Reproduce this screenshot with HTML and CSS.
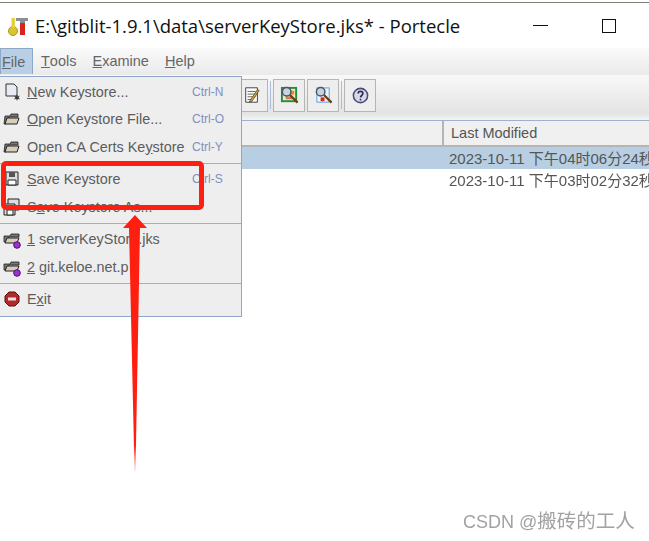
FILE: index.html
```html
<!DOCTYPE html>
<html lang="zh">
<head>
<meta charset="utf-8">
<title>Portecle</title>
<link rel="stylesheet" href="styles.css">
</head>
<body>
<div class="page">
  <header class="titlebar">
    <svg class="app-icon" width="22" height="22" viewBox="0 0 22 22">
      <circle cx="6" cy="16" r="4.500" fill="#d9c52e" stroke="#a89a20"/>
      <rect x="4.500" y="3" width="3.400" height="10" fill="#e3d03a"/>
      <rect x="13" y="7" width="5" height="13" fill="#d8241c"/>
      <path d="M9 3h12v3h-3v2h-5V6H9z" fill="#8a8f94"/>
    </svg>
    <span class="title-text">E:\gitblit-1.9.1\data\serverKeyStore.jks* - Portecle</span>
    <div class="win-controls">
      <span class="win-min"></span>
      <span class="win-max"></span>
    </div>
  </header>

  <div class="soft">
    <nav class="menubar">
      <span class="menu-title active"><u>F</u>ile</span>
      <span class="menu-title"><u>T</u>ools</span>
      <span class="menu-title"><u>E</u>xamine</span>
      <span class="menu-title"><u>H</u>elp</span>
    </nav>

    <div class="toolbar">
      <span class="tool">
        <svg width="18" height="18" viewBox="0 0 20 20"><path d="M3 2h13v16H3z" fill="#fff" stroke="#333"/><path d="M5 6h9M5 9h9M5 12h9M5 15h6" stroke="#555"/><path d="M8 16 16 4l2 1-8 12-3 1z" fill="#d9a21e" stroke="#333" stroke-width=".7"/></svg>
      </span>
      <span class="tool-sep"></span>
      <span class="tool">
        <svg width="19" height="19" viewBox="0 0 20 20"><rect x="2" y="2" width="15" height="14" fill="#f4e7c8" stroke="#1f8f3a" stroke-width="2"/><rect x="11" y="5" width="4" height="4" fill="#e98a2a"/><rect x="6" y="11" width="7" height="3" fill="#d87a5a"/><circle cx="7" cy="6" r="4.500" fill="#c7d3e0" stroke="#4a5560" stroke-width="1.500"/><path d="m10.500 9.500 8 8" stroke="#6b3f16" stroke-width="2.400"/></svg>
      </span>
      <span class="tool">
        <svg width="19" height="19" viewBox="0 0 20 20"><rect x="3" y="2" width="13" height="15" fill="#eef4fb" stroke="#5aa0e0"/><rect x="7" y="12" width="4" height="4" fill="#d8241c"/><circle cx="7" cy="6" r="4.500" fill="#c7d3e0" stroke="#4a5560" stroke-width="1.500"/><path d="m10.500 9.500 8 8" stroke="#6b3f16" stroke-width="2.400"/></svg>
      </span>
      <span class="tool-sep"></span>
      <span class="tool">
        <svg width="19" height="19" viewBox="0 0 20 20"><circle cx="10" cy="10" r="7.500" fill="#d9d7ea" stroke="#4a4a78" stroke-width="1.600"/><path d="M7.500 8c0-3.200 5-3.200 5 0 0 2-2.500 2-2.500 4" fill="none" stroke="#2c2c50" stroke-width="1.700"/><circle cx="10" cy="14.300" r="1" fill="#2c2c50"/></svg>
      </span>
    </div>

    <section class="table">
      <div class="table-head">
        <div class="col-main"></div>
        <div class="col-date">Last Modified</div>
      </div>
      <div class="row selected">
        <div class="col-main"></div>
        <div class="col-date">2023-10-11 下午04时06分24秒</div>
      </div>
      <div class="row">
        <div class="col-main"></div>
        <div class="col-date">2023-10-11 下午03时02分32秒</div>
      </div>
    </section>

    <div class="menu">
      <div class="menu-group">
        <div class="item">
          <svg class="ico" width="20" height="20" viewBox="0 0 20 20"><path d="M4 2h8l3 3v9H4z" fill="#e8ecf2" stroke="#333"/><path d="m15 12 .8 2.400 2.200-.8-1.400 2 1.400 2-2.200-.8L15 19l-.8-2.200-2.200.8 1.400-2-1.400-2 2.200.8z" fill="#333"/></svg>
          <span class="label"><u>N</u>ew Keystore...</span><span class="key">Ctrl-N</span>
        </div>
        <div class="item">
          <svg class="ico" width="20" height="20" viewBox="0 0 20 20"><path d="M3 7h5l1-2h7v3H7l-3 7H2z" fill="#777" stroke="#222" stroke-width=".8"/><path d="M5 9h12l-2 6H3z" fill="#d8cdb8" stroke="#222"/></svg>
          <span class="label"><u>O</u>pen Keystore File...</span><span class="key">Ctrl-O</span>
        </div>
        <div class="item">
          <svg class="ico" width="20" height="20" viewBox="0 0 20 20"><path d="M3 7h5l1-2h7v3H7l-3 7H2z" fill="#777" stroke="#222" stroke-width=".8"/><path d="M5 9h12l-2 6H3z" fill="#d8cdb8" stroke="#222"/></svg>
          <span class="label">Open CA Certs Ke<u>y</u>store</span><span class="key">Ctrl-Y</span>
        </div>
      </div>
      <div class="menu-group">
        <div class="item">
          <svg class="ico" width="20" height="20" viewBox="0 0 20 20"><path d="M4 3h12v13H4z" fill="#ddd" stroke="#222"/><path d="M7 3h6v5H7z" fill="#555"/><path d="M6 11h8v5H6z" fill="#fff" stroke="#222"/></svg>
          <span class="label"><u>S</u>ave Keystore</span><span class="key">Ctrl-S</span>
        </div>
        <div class="item">
          <svg class="ico" width="20" height="20" viewBox="0 0 20 20"><path d="M6 2h11v11H6z" fill="#ddd" stroke="#222"/><path d="M2 7h11v11H2z" fill="#ddd" stroke="#222"/><path d="M5 13h6v5H5z" fill="#fff" stroke="#222"/></svg>
          <span class="label">S<u>a</u>ve Keystore As...</span>
        </div>
      </div>
      <div class="menu-group">
        <div class="item">
          <svg class="ico" width="20" height="20" viewBox="0 0 20 20"><path d="M2 7h6l1-2h8v3H7l-3 5H2z" fill="#777" stroke="#222" stroke-width=".8"/><path d="M5 9h12l-2 5H3z" fill="#d8cdb8" stroke="#222"/><circle cx="15" cy="16" r="3.300" fill="#a32fd0" stroke="#4b1070"/></svg>
          <span class="label"><u>1</u> serverKeyStore.jks</span>
        </div>
        <div class="item">
          <svg class="ico" width="20" height="20" viewBox="0 0 20 20"><path d="M2 7h6l1-2h8v3H7l-3 5H2z" fill="#777" stroke="#222" stroke-width=".8"/><path d="M5 9h12l-2 5H3z" fill="#d8cdb8" stroke="#222"/><circle cx="15" cy="16" r="3.300" fill="#a32fd0" stroke="#4b1070"/></svg>
          <span class="label"><u>2</u> git.keloe.net.p</span>
        </div>
      </div>
      <div class="menu-group">
        <div class="item">
          <svg class="ico" width="20" height="20" viewBox="0 0 20 20"><path d="M7 3h6l4 4v6l-4 4H7l-4-4V7z" fill="#b02a2a" stroke="#5a1414"/><rect x="6" y="8.500" width="8" height="3" fill="#f3dede"/></svg>
          <span class="label">E<u>x</u>it</span>
        </div>
      </div>
    </div>
  </div>

  <div class="red-box"></div>
  <svg class="arrow" width="40" height="256" viewBox="0 0 40 256">
    <defs>
      <linearGradient id="arrow-fade" x1="0" y1="0" x2="0" y2="1">
        <stop offset="0.9" stop-color="#ff1f10"/>
        <stop offset="1" stop-color="#ff1f10" stop-opacity="0.15"/>
      </linearGradient>
    </defs>
    <path d="M20 0 32 13H25L20.500 256H19.500L14 13H8z" fill="url(#arrow-fade)"/>
  </svg>
  <div class="watermark">CSDN @<span class="watermark-cjk">搬砖的工人</span></div>
</div>
</body>
</html>
```

FILE: styles.css
```css
* { box-sizing: border-box; }
html, body { margin: 0; padding: 0; background: #fff; }
.page {
  position: relative;
  width: 649px;
  height: 541px;
  overflow: hidden;
  padding-top: 2px;
  font-family: "Liberation Sans", "Noto Sans CJK SC", sans-serif;
  color: #555;
}
.titlebar {
  display: flex;
  align-items: center;
  height: 46px;
  padding-left: 7px;
  border-top: 1px solid #7c7f74;
  background: #fff;
}
.app-icon { flex: none; margin-right: 6px; }
.title-text {
  font-family: "Open Sans", sans-serif;
  font-size: 18.500px;
  color: #111;
  white-space: nowrap;
}
.win-controls {
  display: flex;
  align-items: center;
  gap: 54px;
  margin-left: auto;
  padding-right: 33px;
}
.win-min { width: 15px; height: 1px; background: #111; }
.win-max { width: 14px; height: 14px; border: 1px solid #111; }

.soft { filter: blur(0.35px); }
.menubar {
  display: flex;
  align-items: stretch;
  height: 27px;
  padding-bottom: 1px;
  background: linear-gradient(#fafafa, #eaeaea);
  font-size: 14.500px;
  color: #666;
}
.menu-title { display: flex; align-items: center; padding: 0 8px; }
.menu-title.active {
  background: #b8cfe5;
  border: 1px solid #8da9c8;
  border-bottom: 0;
  padding: 0 6px 0 1px;
  width: 33px;
}
.toolbar {
  display: flex;
  align-items: center;
  gap: 2px;
  height: 46px;
  padding: 0 0 5px 236px;
  background: linear-gradient(#f8f8f8, #e4e4e4 85%, #f4f4f4);
  border-bottom: 1px solid #9db0cc;
}
.tool {
  display: flex;
  align-items: center;
  justify-content: center;
  width: 32px;
  height: 33px;
  border: 1px solid #b5b5b5;
  background: #eee;
}
.tool-sep { width: 1px; height: 28px; background: #a9bedb; }

.table { font-size: 15px; }
.table-head {
  display: flex;
  height: 26px;
  background: #f0f0f0;
  border-bottom: 2px solid #b5b5b5;
  font-size: 14.500px;
}
.table-head .col-main { width: 444px; border-right: 2px solid #b5b5b5; }
.table-head .col-date { padding-top: 4px; }
.col-main { flex: none; width: 442px; }
.col-date { flex: none; width: 207px; padding-left: 7px; white-space: nowrap; overflow: hidden; }
.row { display: flex; align-items: center; height: 22px; padding-bottom: 2px; }
.row.selected { background: #b8cfe3; }

.menu {
  position: absolute;
  left: -1px;
  top: 28px;
  width: 243px;
  height: 241px;
  background: #eeeeee;
  border: 1px solid #8fa6cc;
  font-size: 14.400px;
  color: #5c5c5c;
  display: flex;
  flex-direction: column;
}
.menu-group { border-bottom: 1px solid #9db0d0; padding: 2px 0; }
.menu-group:first-child { padding-top: 1px; }
.menu-group:last-child { border-bottom: 0; }
.item { display: flex; align-items: center; height: 27.500px; padding-left: 2px; white-space: nowrap; }
.ico { flex: none; margin-right: 5px; }
.label { flex: none; width: 165px; }
.key { font-size: 12px; color: #7f8fc0; }

.red-box {
  position: absolute;
  left: 1px;
  top: 161px;
  width: 203px;
  height: 49px;
  border: 5px solid #ff1f10;
  border-radius: 5px;
}
.arrow { position: absolute; left: 115px; top: 215px; }
.watermark {
  position: absolute;
  left: 463px;
  top: 505px;
  font-size: 18px;
  color: #a2a2a2;
  white-space: nowrap;
  filter: blur(0.35px);
}
.watermark-cjk { font-size: 19.500px; }
```
